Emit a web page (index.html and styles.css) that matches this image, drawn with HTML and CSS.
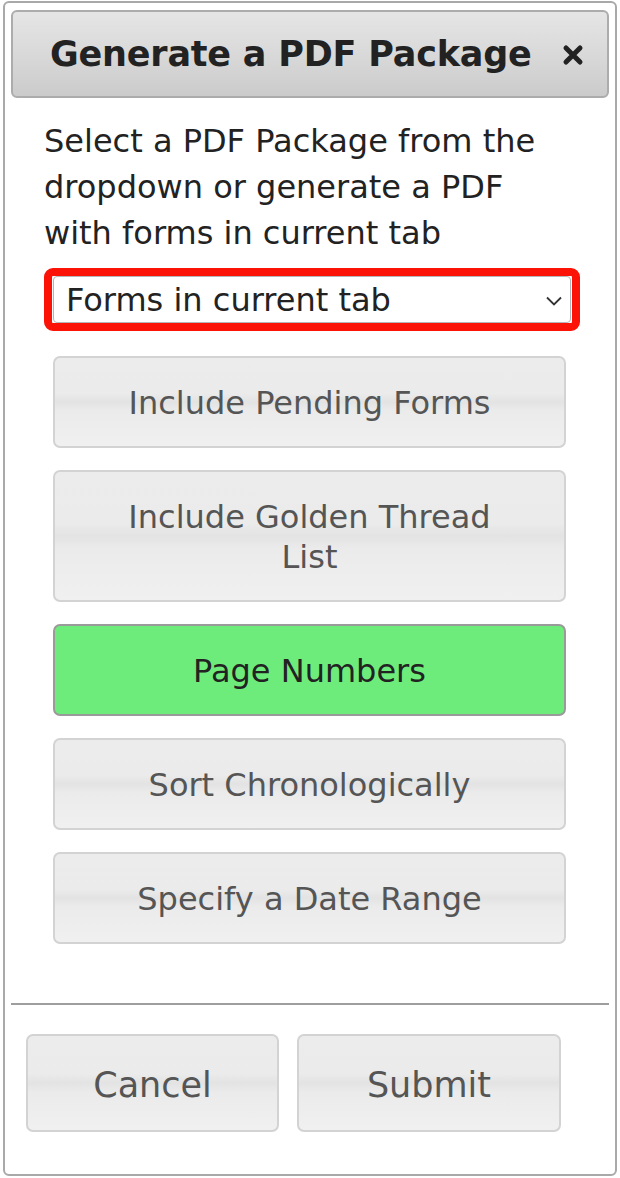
FILE: index.html
```html
<!DOCTYPE html>
<html lang="en">
<head>
<meta charset="utf-8">
<title>Generate a PDF Package</title>
<link rel="stylesheet" href="styles.css">
</head>
<body>
<div class="dialog">
  <div class="titlebar">
    <span class="title">Generate a PDF Package</span>
    <svg class="close" width="22" height="22" viewBox="0 0 22 22" aria-label="close">
      <path d="M4 4 L18 18 M18 4 L4 18" stroke="#222" stroke-width="5" stroke-linecap="round" fill="none"/>
    </svg>
  </div>
  <div class="content">
    <p class="intro">Select a PDF Package from the dropdown or generate a PDF with forms in current tab</p>
    <div class="highlight">
      <div class="select-box">
        <span class="select-text">Forms in current tab</span>
        <svg class="chevron" width="18" height="12" viewBox="0 0 18 12">
          <path d="M2 2.5 L9 9.5 L16 2.5" stroke="#333" stroke-width="1.8" fill="none"/>
        </svg>
      </div>
    </div>
    <div class="options">
      <div class="btn">Include Pending Forms</div>
      <div class="btn">Include Golden Thread List</div>
      <div class="btn btn-on">Page Numbers</div>
      <div class="btn">Sort Chronologically</div>
      <div class="btn">Specify a Date Range</div>
    </div>
  </div>
  <div class="buttonpane">
    <div class="btn btn-lg btn-cancel">Cancel</div>
    <div class="btn btn-lg btn-submit">Submit</div>
  </div>
</div>
</body>
</html>
```

FILE: styles.css
```css
html, body {
  margin: 0;
  padding: 0;
  background: #ffffff;
}

body {
  font-family: "DejaVu Sans", Verdana, sans-serif;
  color: #222222;
}

.dialog {
  margin: 1px 3px 2px 3px;
  height: 1175px;
  box-sizing: border-box;
  border: 2px solid #a9a9a9;
  border-radius: 6px;
  padding: 7px 6px 6px 6px;
  background: #ffffff;
  display: flex;
  flex-direction: column;
}

.titlebar {
  height: 88px;
  box-sizing: border-box;
  border: 2px solid #acacac;
  border-radius: 6px;
  background: linear-gradient(to bottom, #e5e5e5 0%, #d9d9d9 50%, #cbcbcb 100%);
  display: flex;
  align-items: center;
  justify-content: space-between;
  padding: 0 23px 0 37px;
}

.title {
  font-weight: bold;
  font-size: 35px;
  color: #222222;
  letter-spacing: -0.2px;
}

.close {
  display: block;
  margin-top: 2px;
}

.content {
  padding: 20px 27px 59px 33px;
}

.intro {
  margin: 0;
  width: 520px;
  font-size: 32px;
  line-height: 46px;
  color: #222222;
}

.highlight {
  margin-top: 12px;
  width: 536px;
  box-sizing: border-box;
  border: 8px solid #fb1308;
  border-radius: 9px;
  padding: 0 1px;
}

.select-box {
  height: 47px;
  box-sizing: border-box;
  border: 1px solid #b5b5b5;
  border-radius: 4px;
  background: #ffffff;
  display: flex;
  align-items: center;
  justify-content: space-between;
  padding: 0 7px 0 12px;
}

.select-text {
  font-size: 32px;
  color: #222222;
  line-height: 40px;
}

.chevron {
  display: block;
  margin-top: 2px;
}

.options {
  margin-top: 25px;
  display: flex;
  flex-direction: column;
  gap: 22px;
  padding-left: 9px;
}

.btn {
  box-sizing: border-box;
  border: 2px solid #d3d3d3;
  border-radius: 7px;
  background: linear-gradient(to bottom, #ececec 0%, #ebebeb 40%, #e3e3e3 50%, #ebebeb 60%, #f0f0f0 100%);
  color: #555555;
  font-size: 32px;
  line-height: 40px;
  padding: 25px 50px 23px 50px;
  text-align: center;
}

.options .btn {
  width: 513px;
}

.btn-on {
  background: #6eec7b;
  border-color: #9a9a9a;
  color: #222222;
}

.buttonpane {
  border-top: 2px solid #9e9e9e;
  padding: 29px 15px 0 15px;
  display: flex;
  gap: 18px;
}

.btn-lg {
  font-size: 35px;
  line-height: 44px;
  padding: 27px 0 23px 0;
}

.btn-cancel {
  width: 253px;
}

.btn-submit {
  width: 264px;
}
```
